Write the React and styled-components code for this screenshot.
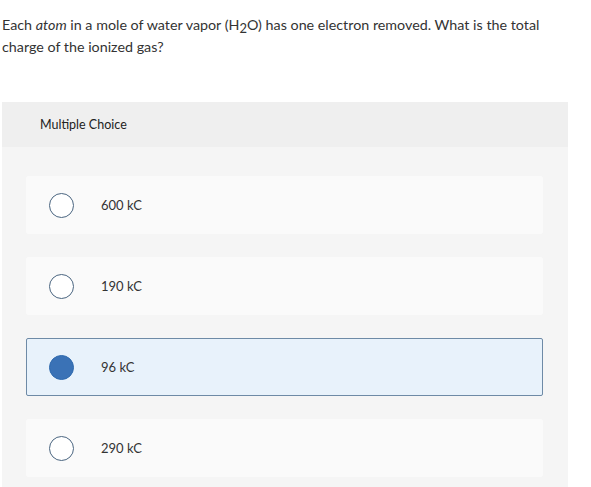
import React from "react";
import styled, { createGlobalStyle } from "styled-components";

const GlobalStyle = createGlobalStyle`
  body {
    margin: 0;
    background: #ffffff;
    font-family: "Lato", "Open Sans", sans-serif;
    color: #333333;
  }
`;

const Page = styled.div`
  width: 591px;
  padding: 14px 0 0 2px;
  box-sizing: border-box;
`;

const Question = styled.p`
  margin: 0;
  width: 548px;
  font-size: 14.3px;
  line-height: 22px;
  color: #333333;

  em {
    font-style: italic;
  }
`;

const Sub = styled.span`
  display: inline-block;
  line-height: 0;
  vertical-align: -3px;
  font-size: 13px;
`;

const Panel = styled.div`
  margin-top: 44px;
  width: 566px;
  background: #f5f5f5;
`;

const PanelHeader = styled.div`
  height: 45px;
  display: flex;
  align-items: center;
  padding-left: 38px;
  background: #efefef;
  font-size: 12.5px;
  color: #222222;
`;

const Choices = styled.div`
  display: flex;
  flex-direction: column;
  gap: 23px;
  padding: 29px 25px 10px 24px;
`;

const Choice = styled.div`
  height: 58px;
  box-sizing: border-box;
  display: flex;
  align-items: center;
  padding-left: 22px;
  border-radius: 2px;
  background: ${props => (props.selected ? "#e8f2fb" : "#fafafa")};
  border: 1px solid ${props => (props.selected ? "#6e8aa6" : "#fafafa")};
`;

const Radio = styled.span`
  width: 25px;
  height: 25px;
  box-sizing: border-box;
  border-radius: 50%;
  flex-shrink: 0;
  border: 1px solid ${props => (props.selected ? "#2f6aae" : "#4a6580")};
  background: ${props => (props.selected ? "#3a72b6" : "#ffffff")};
`;

const Label = styled.span`
  margin-left: 27px;
  font-size: 13px;
  color: #333333;
`;

const options = [
  { text: "600 kC" },
  { text: "190 kC" },
  { text: "96 kC", selected: true },
  { text: "290 kC" },
];

const App = () => {
  return (
    <Page>
      <GlobalStyle />
      <Question>
        Each <em>atom</em> in a mole of water vapor (H<Sub>2</Sub>O) has one
        electron removed. What is the total charge of the ionized gas?
      </Question>

      <Panel>
        <PanelHeader>Multiple Choice</PanelHeader>
        <Choices>
          {options.map(o => (
            <Choice key={o.text} selected={o.selected}>
              <Radio selected={o.selected} />
              <Label>{o.text}</Label>
            </Choice>
          ))}
        </Choices>
      </Panel>
    </Page>
  );
};

export default App;
